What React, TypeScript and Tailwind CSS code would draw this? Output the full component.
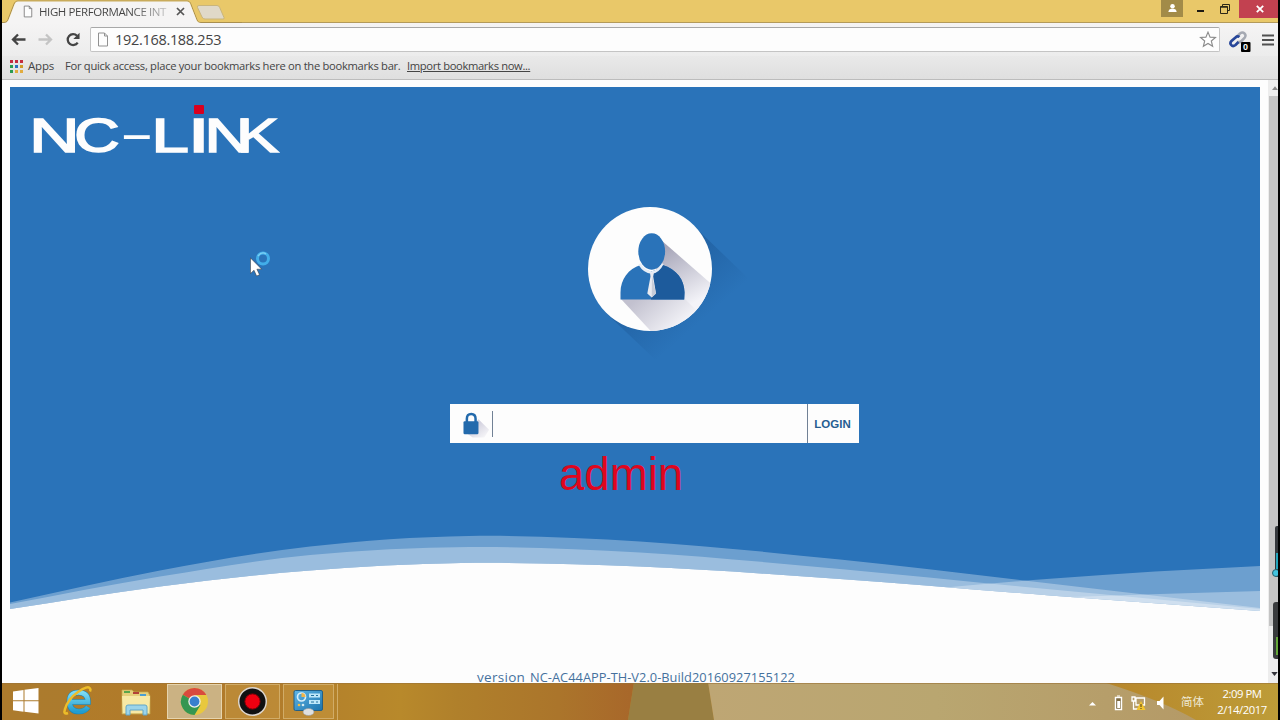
import React from "react";

const ui = "font-['Open_Sans','Noto_Sans_CJK_SC',sans-serif]";

function PageIcon({ className }: { className: string }) {
  return (
    <svg viewBox="0 0 12 14" className={className} fill="#fdfdfd" stroke="#777" strokeWidth="1">
      <path d="M1.5.5h6l3 3v10h-9z" />
      <path d="M7.5.5v3h3" fill="none" />
    </svg>
  );
}

function TabStrip() {
  return (
    <div className="relative flex h-[23px] shrink-0 items-start border-b border-[#b39a5a] bg-[#e9c869]">
      <svg className="absolute left-0 top-0 h-6 w-[240px]" viewBox="2 0 240 24">
        <path d="M2 22.5H4c2 0 3-1 4-3L14 4c.8-2 2-3 4-3H187c2 0 3 1 3.600 2.500L197 20c1 2 2 2.500 4 2.500h41" fill="none" stroke="#a98f4f" />
        <path d="M2 24v-1H4c2 0 3.500-1 4.500-3L14.500 4.500c.8-2 2-3 3.500-3H187c1.500 0 2.500 1 3 2L196.500 20c1 2.300 2.500 3 4.500 3h3v1z" fill="#f5f4f4" />
        <path d="M199 5.500h18q2 0 2.700 2l4.300 10q.7 1.500-1 1.500H205q-2 0-3-2l-4.500-9.500q-.8-2 1.500-2z" fill="#e0d9c8" stroke="#c9b57c" />
      </svg>
      <div className="relative flex h-[23px] w-[192px] items-center pl-[21px]">
        <PageIcon className="h-[13px] w-[10px]" />
        <span className={`${ui} ml-[6px] w-[130px] overflow-hidden whitespace-nowrap bg-gradient-to-r from-[#444] from-70% to-[#ccc] bg-clip-text text-[11.5px] leading-[22px] tracking-[-0.4px] text-transparent`}>HIGH PERFORMANCE INT</span>
        <svg className="ml-[7px] h-[9px] w-[9px]" viewBox="0 0 9 9" stroke="#555" strokeWidth="1.7"><path d="M1 1l7 7M8 1L1 8" /></svg>
      </div>
      <div className="ml-auto flex h-[18px]">
        <div className="flex h-[17px] w-[22px] items-center justify-center bg-[#a28b48]">
          <svg viewBox="0 0 10 10" className="h-[9px] w-[9px]" fill="#fff"><circle cx="5" cy="2.600" r="2.500" /><path d="M.5 9V8q.5-2.500 3-2.800h3q2.500.3 3 2.800v1z" /></svg>
        </div>
        <div className="flex w-[37px] justify-center pr-[3px]"><div className="mt-[10px] h-[2px] w-[7px] bg-[#1d1a12]" /></div>
        <svg className="mt-[4px] h-[10px] w-[10px]" viewBox="0 0 10 10" fill="none" stroke="#2b2717"><path d="M2.500 2V.5h7v6H8M.5 2.500h7v7h-7z" /><path d="M.5 3h7" strokeWidth="1.500" /></svg>
        <div className="ml-[9px] flex h-[18px] w-[39px] items-center justify-center bg-[#c24150]">
          <svg viewBox="0 0 8 8" className="ml-[2px] h-[8px] w-[8px]" stroke="#fff" strokeWidth="1.800"><path d="M.8.8l6.400 6.400M7.200.8L.8 7.200" /></svg>
        </div>
      </div>
    </div>
  );
}

function AddressBar() {
  return (
    <div className="relative flex h-[33px] shrink-0 items-center bg-gradient-to-b from-[#f5f4f4] to-[#ececec] pl-[9px]">
      <svg viewBox="0 0 15 12" className="h-[13px] w-[15px]" fill="none" stroke="#444" strokeWidth="2.300"><path d="M14.500 6H2M7 1L2 6l5 5" /></svg>
      <svg viewBox="0 0 15 12" className="ml-[12px] h-[13px] w-[15px]" fill="none" stroke="#c4c4c4" strokeWidth="2.300"><path d="M.5 6H13M8 1l5 5-5 5" /></svg>
      <svg viewBox="0 0 16 16" className="ml-[12px] h-[15px] w-[16px]" fill="none" stroke="#444" strokeWidth="2.400"><path d="M13 11.300A5.800 5.800 0 1 1 12.300 4" /><path d="M15 .8v6.700H8.300z" fill="#444" stroke="none" /></svg>
      <div className="ml-[9px] flex h-[25px] w-[1130px] items-center rounded-[2px] border border-[#c4c4c4] border-t-[#a8a8a8] bg-[#fdfdfd] pl-[6px]">
        <PageIcon className="h-[15px] w-[12px] opacity-80" />
        <span className={`${ui} ml-[6px] text-[14.5px] leading-5 tracking-[-0.31px] text-[#444]`}>192.168.188.253</span>
        <svg viewBox="0 0 18 18" className="ml-auto mr-[2px] h-[17px] w-[18px]" fill="#fff" stroke="#8b8b8b" strokeWidth="1.200"><path d="M9 1.200l2.200 5.300 5.700.4-4.400 3.700 1.400 5.600L9 13.200l-4.900 3 1.400-5.600L1.100 6.900l5.700-.4z" /></svg>
      </div>
      <svg viewBox="0 0 22 22" className="ml-[9px] mt-[3px] h-[22px] w-[22px]" fill="none">
        <path d="M8 6.500l3-3q2.500-2 4.500 0t0 4.500l-3 3q-2 2-4.500.5" stroke="#a5a9b2" strokeWidth="2.500" />
        <path d="M10.500 7q-2-1.500-4 .4L2.500 11q-2 2-.3 4t4.300 0l3-3" stroke="#28479a" strokeWidth="2.700" />
        <rect x="12" y="12" width="9.500" height="10" rx="1" fill="#000" />
        <text x="14" y="20.300" fontFamily="Liberation Sans" fontSize="9" fontWeight="bold" fill="#fff">0</text>
      </svg>
      <svg viewBox="0 0 12 12" className="ml-[11px] h-[12px] w-[12px]" stroke="#505050" strokeWidth="2"><path d="M0 1.500h12M0 6h12M0 10.500h12" /></svg>
    </div>
  );
}

const appColors = ["#c42b40", "#c42b40", "#c42b40", "#2a9b50", "#2c6fc0", "#cf9a29", "#2a9b50", "#e2ac3e", "#e2ac3e"];

function Bookmarks() {
  return (
    <div className={`${ui} flex h-[24px] shrink-0 items-center border-b border-[#bcbcbc] bg-gradient-to-b from-[#e9e9e9] to-[#dfdfdf] pb-[3px] pl-[8px] text-[11.500px] text-[#444]`}>
      <div className="grid grid-cols-3 gap-[2px]">
        {appColors.map((c, i) => <i key={i} className="h-[3px] w-[3px]" style={{ background: c }} />)}
      </div>
      <span className="ml-[5px] w-[37px] whitespace-nowrap tracking-[-0.2px]">Apps</span>
      <span className="w-[342px] whitespace-nowrap pt-px text-[11.200px] tracking-[-0.29px]">For quick access, place your bookmarks here on the bookmarks bar.</span>
      <span className="whitespace-nowrap pt-px text-[11.200px] tracking-[-0.34px] underline">Import bookmarks now...</span>
    </div>
  );
}

const logoLetters = [
  { ch: "N", x: 29.2, y: 152, sx: 1.45, w: 1.6 },
  { ch: "C", x: 74.3, y: 152, sx: 1.31, w: 1.6 },
  { ch: "-", x: 119.3, y: 149.5, sx: 2.2, w: 0 },
  { ch: "L", x: 151.5, y: 152, sx: 1.4, w: 1.6 },
  { ch: "I", x: 187.8, y: 152, sx: 1.65, w: 1.6 },
  { ch: "N", x: 204.6, y: 152, sx: 1.38, w: 1.6 },
  { ch: "K", x: 236.7, y: 152, sx: 1.31, w: 1.6 },
];

function Logo() {
  return (
    <svg className="absolute left-[12px] top-[14px] h-[60px] w-[280px]" viewBox="22 101 280 60">
      {logoLetters.map((l, i) => (
        <text key={i} transform={`translate(${l.x} ${l.y}) scale(${l.sx} 1)`} fontFamily="Liberation Sans" fontSize="48" fill="#fdfdfd" stroke="#fdfdfd" strokeWidth={l.w}>{l.ch}</text>
      ))}
      <rect x="194" y="105" width="10" height="9" rx="1" fill="#d9001f" />
    </svg>
  );
}

function Avatar() {
  return (
    <svg className="absolute left-[570px] top-[113px] h-[180px] w-[190px]" viewBox="580 200 190 180">
      <defs>
        <linearGradient id="cast" gradientUnits="userSpaceOnUse" x1="655" y1="275" x2="698" y2="324"><stop stopColor="#1c5795" stopOpacity=".6" /><stop offset="1" stopColor="#1c5795" stopOpacity="0" /></linearGradient>
        <linearGradient id="inner" gradientUnits="userSpaceOnUse" x1="660" y1="250" x2="690" y2="305"><stop stopColor="#a6a5b8" /><stop offset="1" stopColor="#f3f3f8" /></linearGradient>
        <linearGradient id="lower" gradientUnits="userSpaceOnUse" x1="640" y1="296" x2="675" y2="335"><stop stopColor="#c2c1cf" /><stop offset="1" stopColor="#f6f6fa" /></linearGradient>
        <clipPath id="disc"><circle cx="650" cy="269" r="62" /></clipPath>
        <clipPath id="rightHalf"><path d="M651 250h40v60h-40z" /></clipPath>
      </defs>
      <path d="M698 230l52 50-86 88-59-56z" fill="url(#cast)" />
      <circle cx="650" cy="269" r="62" fill="#fdfdfd" />
      <g clipPath="url(#disc)">
        <path d="M661 240l62 54-12 40-55-64z" fill="url(#inner)" />
        <path d="M621 299h64l20 20-45 22z" fill="url(#lower)" />
      </g>
      <path d="M620.500 299.500v-7c0-13 8-24 20-27.500 4 8 17 8 22 0 14 4 22 15 22 27.500l-.3 7z" fill="#2a73b9" />
      <path d="M620.500 299.500v-7c0-13 8-24 20-27.500 4 8 17 8 22 0 14 4 22 15 22 27.500l-.3 7z" fill="#1d5b9c" clipPath="url(#rightHalf)" />
      <path d="M639.500 264q5 8 12 8.500 7-.5 11-9" fill="none" stroke="#e6edf6" strokeWidth="2.500" />
      <ellipse cx="651.700" cy="251.500" rx="13.400" ry="18.200" fill="#2a73b9" />
      <path d="M650 272.500h4l-.8 4 2.800 17-4.300 4-4.400-4 3.200-17z" fill="#e9eaf0" />
      <path d="M652 276l4 17.500-4.300 4z" fill="#c7ccd8" />
    </svg>
  );
}

type Point = [number, number];

function smooth(points: Point[]) {
  const last = points.length - 1;
  const slope = (i: number) => {
    const a = points[Math.max(i - 1, 0)];
    const b = points[Math.min(i + 1, last)];
    return (b[1] - a[1]) / (b[0] - a[0]);
  };
  let d = "";
  for (let i = 0; i < last; i++) {
    const [x0, y0] = points[i];
    const [x1, y1] = points[i + 1];
    const h = (x1 - x0) / 3;
    d += `C${x0 + h} ${y0 + slope(i) * h} ${x1 - h} ${y1 - slope(i + 1) * h} ${x1} ${y1}`;
  }
  return d;
}

const floor: Point[] = [[10, 609], [160, 586.5], [310, 570.5], [461, 563], [640, 566.5], [840, 579], [1050, 595.5], [1260, 611]];
const crests: Point[][] = [
  [[10, 602.5], [160, 570.5], [310, 546.5], [469, 536], [640, 541.5], [840, 559.500], [1020, 580], [1260, 608]],
  [[10, 604], [160, 576.5], [310, 555], [469, 547], [640, 552.5], [840, 569], [1020, 586.5], [1260, 609]],
  [[945, 587.5], [1050, 578.8], [1155, 571.5], [1260, 566]],
  [[1070, 597], [1160, 594], [1260, 591]],
];

function Waves() {
  return (
    <svg className="absolute left-0 top-0 h-[530px] w-[1250px]" viewBox="10 87 1250 530">
      <defs>
        <clipPath id="hero"><path d={`M10 87L10 609${smooth(floor)}L1260 87Z`} /></clipPath>
      </defs>
      <g clipPath="url(#hero)">
        <rect x="10" y="87" width="1250" height="530" fill="#2a73b9" />
        {crests.map((c, i) => (
          <path key={i} d={`M${c[0][0]} ${c[0][1]}${smooth(c)}L1260 617H${c[0][0]}Z`} fill="#fff" fillOpacity={0.315} />
        ))}
      </g>
    </svg>
  );
}

function LoginPage() {
  return (
    <main className="relative flex h-[603px] shrink-0 overflow-hidden bg-[#fdfdfd]">
      <div className="relative ml-[8px] mt-[7px] h-[596px] w-[1250px]">
        <Waves />
        <Logo />
        <Avatar />
        <div className="absolute left-[440px] top-[317px] flex h-[39px] w-[409px] bg-[#fdfdfd]">
          <div className="flex w-[358px] items-center border-r border-[#718195]">
            <svg viewBox="0 0 30 28" className="ml-[13px] mt-[2px] h-[28px] w-[29px]">
              <defs><linearGradient id="lockShade" x2="1" y2="1"><stop offset=".4" stopColor="#d4d3e0" /><stop offset="1" stopColor="#fdfdfd" /></linearGradient></defs>
              <path d="M16 8l11 11-5 8H10l-7-5z" fill="url(#lockShade)" />
              <path d="M4 11V7.500Q4 2.500 8.500 2.500T13 7.500V11" fill="none" stroke="#236aac" strokeWidth="2.600" />
              <rect x=".5" y="10" width="15.500" height="13.500" rx="1.300" fill="#236aac" />
            </svg>
            <div className="h-[26px] w-px bg-[#718195]" />
          </div>
          <button className="flex-1 pr-[2px] pt-[2px] font-['Liberation_Sans',sans-serif] text-[11.500px] font-bold text-[#265d91]">LOGIN</button>
        </div>
        <div className="absolute left-[549px] top-[363px] font-['Liberation_Sans',sans-serif] text-[45.600px] leading-[50px] text-[#df061e]">admin</div>
        <div className={`${ui} absolute left-[467px] top-[580px] flex whitespace-nowrap text-[#45719d]`}>
          <span className="w-[53px] text-[13.500px] leading-5 tracking-[0.3px]">version</span>
          <span className="text-[12.800px] leading-5 tracking-[0.04px]">NC-AC44APP-TH-V2.0-Build20160927155122</span>
        </div>
        <svg className="absolute left-[239px] top-[162px] h-[30px] w-[26px]" viewBox="0 0 26 30">
          <circle cx="14" cy="9.500" r="5.500" fill="none" stroke="#42aee9" strokeWidth="3" />
          <path d="M9 7q4-5 8-2" fill="none" stroke="#7dd0f4" strokeWidth="1.300" />
          <path d="M1.500 9v15.500l3.500-3.300 2.600 5.800 2.900-1.200-2.600-5.600h4.800z" fill="#fff" stroke="#333" strokeWidth=".5" />
        </svg>
      </div>
      <div className="ml-[8px] flex w-[10px] flex-col items-center bg-[#ededed]">
        <svg viewBox="0 0 8 5" className="ml-[3px] mt-[6px] h-[4px] w-[6px]" fill="#888"><path d="M4 0l4 5H0z" /></svg>
        <div className="mt-[6px] h-[530px] w-[9px] bg-[#c4c4c4]" />
        <svg viewBox="0 0 8 5" className="ml-[3px] mt-auto mb-[7px] h-[4px] w-[7px]" fill="#34343b"><path d="M0 0h8L4 5z" /></svg>
      </div>
      <svg className="absolute right-0 top-[446px] h-[135px] w-[7px]" viewBox="0 0 7 135">
        <rect x="4" y="0" width="5" height="51" rx="2" fill="#35383c" />
        <path d="M6 27v16" stroke="#24a5bc" strokeWidth="2" />
        <circle cx="5" cy="47" r="3.500" fill="#43c4df" stroke="#28606d" />
        <rect x="2" y="76" width="8" height="57" rx="3" fill="#393b3d" />
        <path d="M6 111v18" stroke="#65a839" strokeWidth="2" />
      </svg>
    </main>
  );
}

function TaskbarIcons() {
  return (
    <svg className="h-[37px] w-[340px] shrink-0" viewBox="2 683 340 37">
      <defs>
        <linearGradient id="ieBlue" x2="0" y2="1"><stop stopColor="#7cdbf5" /><stop offset="1" stopColor="#239dce" /></linearGradient>
        <linearGradient id="panel" x2="1" y2="1"><stop stopColor="#60b6e6" /><stop offset="1" stopColor="#1c73ad" /></linearGradient>
      </defs>
      <g fill="#fff"><path d="M13 691.500l10.500-1.500v10.300H13zM24.500 689.800L38.500 688v12.300h-14zM13 701.300h10.500v10.500L13 710.300zM24.500 701.300h14v12.200l-14-1.700z" /></g>
      <g fill="none">
        <path d="M70.500 702H88Q88 692.500 78.500 692.500T69.500 702T79 711.500Q85 711.500 88 707" stroke="#1a83b5" strokeWidth="5.600" />
        <path d="M70.500 702H88Q88 692.500 78.500 692.500T69.500 702T79 711.500Q85 711.500 88 707" stroke="url(#ieBlue)" strokeWidth="4.600" />
        <path d="M68 713q-5 2-3-4 3-10 13-17t12-3.500q1 1 0 3" stroke="#edbd29" strokeWidth="2.500" />
      </g>
      <g>
        <path d="M122 690h10l2 2h14l2 4v18h-28z" fill="#e5cf7a" stroke="#c6aa52" strokeWidth=".7" />
        <path d="M124 691h6v2h-6z" fill="#58a64b" /><path d="M133 692h6v2h-6z" fill="#b34239" /><path d="M140 694h6v2h-6z" fill="#4b9ed1" />
        <path d="M122 696h28l-1 17h-26z" fill="#f7e9a5" />
        <path d="M126 715v-8q0-2 2-2h17q2 0 2 2v8h-4v-5h-13v5z" fill="#9bd4ea" stroke="#62a6c6" />
      </g>
      <rect x="167.500" y="684.500" width="54" height="34" fill="#cbb283" stroke="#e6d4ad" />
      <g>
        <circle cx="194.500" cy="701.500" r="13.500" fill="#e8c83e" />
        <path d="M194.500 701.500L182.800 694.700A13.500 13.500 0 0 1 206.200 694.700z" fill="#d94a3e" />
        <path d="M194.500 701.500L182.800 694.700A13.500 13.500 0 0 0 194.500 715L200.500 705z" fill="#359651" />
        <path d="M194.500 695h11.800q1 2 1.500 5H200z" fill="#e8c83e" />
        <circle cx="194.500" cy="701.500" r="6.200" fill="#f4f1e8" /><circle cx="194.500" cy="701.500" r="4.900" fill="#397fce" />
      </g>
      <rect x="225.500" y="684.500" width="54" height="34" fill="#ca9b45" fillOpacity=".45" stroke="#d1ac67" />
      <circle cx="252.500" cy="701.500" r="13.800" fill="#111" stroke="#ddd6cd" strokeWidth="1.500" /><circle cx="252.500" cy="701.500" r="7.600" fill="#ef0010" stroke="#8b0008" />
      <rect x="283.500" y="684.500" width="50" height="34" fill="#ca9b45" fillOpacity=".45" stroke="#d1ac67" /><path d="M337.500 684v36" stroke="#d1ac67" />
      <g>
        <rect x="294" y="690.500" width="28.500" height="20" rx="1.500" fill="url(#panel)" stroke="#235f85" />
        <circle cx="301.500" cy="697" r="4" fill="none" stroke="#d5eef9" strokeWidth="1.700" /><path d="M301.500 697v-4a4 4 0 0 1 4 4z" fill="#f2b548" />
        <g fill="#bfe7f9"><rect x="309" y="693.500" width="11" height="4" /><rect x="309" y="700" width="11" height="4" /></g>
        <path d="M311 695.500h3M316 695.500h2M311 702h3M316 702h2" stroke="#2473a0" strokeWidth="1.200" />
        <circle cx="299" cy="705" r="1.300" fill="#efbd46" /><circle cx="303" cy="705" r="1.300" fill="#d7ebef" />
        <ellipse cx="308.500" cy="712" rx="5.500" ry="3.500" fill="#dedfdf" stroke="#999" strokeWidth=".6" />
      </g>
    </svg>
  );
}

function Taskbar() {
  return (
    <footer className="relative flex h-[37px] shrink-0 overflow-hidden bg-[#b8812b]">
      <svg className="absolute inset-0 h-[37px] w-full" viewBox="2 683 1276 37" preserveAspectRatio="none">
        <defs>
          <linearGradient id="wood"><stop stopColor="#b17c29" /><stop offset=".4" stopColor="#b07a2b" /><stop offset=".63" stopColor="#b8892b" /><stop offset=".72" stopColor="#b0802b" /><stop offset=".88" stopColor="#ab752b" /><stop offset="1" stopColor="#a8672a" /></linearGradient>
          <linearGradient id="sand"><stop stopColor="#bea674" /><stop offset=".4" stopColor="#b9a670" /><stop offset="1" stopColor="#b39664" /></linearGradient>
          <linearGradient id="goldEnd"><stop stopColor="#b7862b" /><stop offset="1" stopColor="#bd9c38" /></linearGradient>
        </defs>
        <path d="M2 682H634L628 720H2z" fill="url(#wood)" />
        <path d="M2 682h71L61 720H2z" fill="#a97b31" opacity=".6" />
        <path d="M634 682h74l6 38h-86z" fill="#997f42" />
        <path d="M708 682h570v38H714z" fill="url(#sand)" />
        <path d="M1103 682h175v38h-82q-35-20-93-38z" fill="url(#goldEnd)" />
        <path d="M2 683.500h1276" stroke="#9b7439" strokeWidth="1" opacity=".6" />
      </svg>
      <div className="relative flex w-full items-center">
        <TaskbarIcons />
        <div className="ml-auto flex items-center pr-[11px] text-white">
          <svg className="mt-[2px] h-[20px] w-[85px]" viewBox="1086 692 85 20">
            <path d="M1090 704.500l3.500-3.500 3.500 3.500z" fill="#fff" />
            <path d="M1117.500 696.500h5v12h-6v-12z" fill="#7e6b43" stroke="#fff" strokeWidth="1.400" /><path d="M1118 695h3" stroke="#fff" /><path d="M1118.200 700h3v7h-3z" fill="#fff" />
            <g fill="none" stroke="#fff" strokeWidth="1.300"><path d="M1137 697h8.500v7H1137zM1133 696h3v4h-3zM1134.500 700v8h5" /></g>
            <path d="M1142 700l4.500 9h-9z" fill="#f2c42e" /><path d="M1142 703v3m0 1v1" stroke="#4c3d1d" />
            <path d="M1158 700h2.500l4-4.500v13l-4-4.500h-2.500z" fill="#fff" />
          </svg>
          <span className={`${ui} ml-[11px] mt-[1px] text-[11.500px] leading-4 text-[#eee8d3]`}>简体</span>
          <div className={`${ui} ml-[13px] w-[50px] whitespace-nowrap text-center text-[11.300px] leading-[16px] tracking-[-0.45px]`}><div>2:09 PM</div><div>2/14/2017</div></div>
        </div>
      </div>
    </footer>
  );
}

export default function App() {
  return (
    <div className="h-[720px] w-[1280px] overflow-hidden bg-black px-[2px]">
      <div className="flex h-full flex-col overflow-hidden">
        <TabStrip />
        <AddressBar />
        <Bookmarks />
        <LoginPage />
        <Taskbar />
      </div>
    </div>
  );
}
